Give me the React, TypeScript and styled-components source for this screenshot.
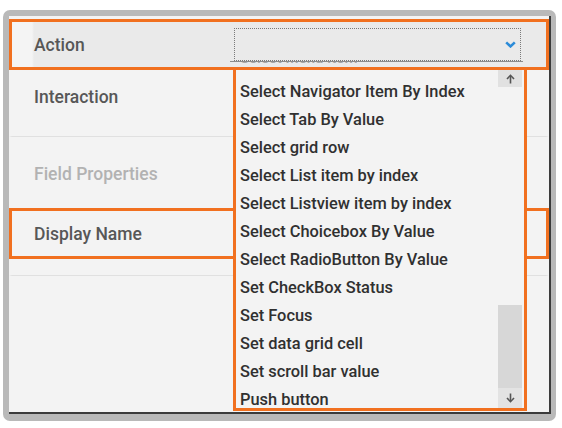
import React from "react";
import styled, { createGlobalStyle } from "styled-components";

const Global = createGlobalStyle`
  html, body { margin: 0; padding: 0; background: #ffffff; }
  body { font-family: Roboto, "Liberation Sans", Arial, sans-serif; }
`;

const ORANGE = "#f1701f";

const Frame = styled.div`
  margin: 10px 0 0 3px;
  width: 553px;
  height: 411px;
  box-sizing: border-box;
  padding: 6px 5px 7px 6px;
  background: #b9b9b9;
  border-radius: 7px;
`;

const Panel = styled.div`
  position: relative;
  height: 100%;
  box-sizing: border-box;
  background: #f3f3f3;
  border-right: 2px solid #3b3b3b;
  border-bottom: 2px solid #3b3b3b;
  padding-top: 3px;
  display: flex;
  flex-direction: column;
`;

const Row = styled.div<{ $h: number; $hl?: boolean; $top?: boolean; $line?: boolean; $shade?: boolean }>`
  flex: none;
  height: ${(p) => p.$h}px;
  box-sizing: border-box;
  display: flex;
  align-items: ${(p) => (p.$top ? "flex-start" : "center")};
  border: 3px solid ${(p) => (p.$hl ? ORANGE : "transparent")};
  ${(p) => (p.$line ? "border-bottom: 1px solid #e0e0e0;" : "")}
  background: ${(p) =>
    p.$shade
      ? "linear-gradient(to right, #f4f4f4 0, #f4f4f4 20px, #eaeaea 22px)"
      : "transparent"};
`;

const Filler = styled.div`
  flex: 1;
`;

const Label = styled.div<{ $muted?: boolean; $w?: number; $pt?: number }>`
  box-sizing: border-box;
  width: ${(p) => (p.$w ? `${p.$w}px` : "auto")};
  padding-left: 22px;
  padding-top: ${(p) => p.$pt ?? 0}px;
  font-size: 17.5px;
  line-height: 20px;
  font-weight: 500;
  color: ${(p) => (p.$muted ? "#b2b2b2" : "#575757")};
  white-space: nowrap;
`;

const SelectWrap = styled.div`
  width: 293px;
  border-bottom: 1px solid #8c8c8c;
  padding-left: 4px;
  box-sizing: border-box;
`;

const SelectBox = styled.div`
  width: 287px;
  height: 33px;
  box-sizing: border-box;
  border: 1px dotted #7a7a7a;
  display: flex;
  align-items: center;
  justify-content: flex-end;
  padding-right: 4px;
`;

const Dropdown = styled.div`
  position: absolute;
  left: 224px;
  top: 51px;
  width: 294px;
  height: 344px;
  box-sizing: border-box;
  border: 3px solid ${ORANGE};
  background: #f3f3f3;
  display: flex;
`;

const Peek = styled.div`
  position: absolute;
  left: 4px;
  top: -8px;
  height: 4px;
  overflow: hidden;
  font-size: 15px;
  font-weight: 500;
  color: #a8a8a8;
  line-height: 18px;
  white-space: nowrap;
  & > span {
    display: block;
    margin-top: -13px;
  }
`;

const List = styled.div`
  flex: 1;
  overflow: hidden;
  padding: 8px 0 0 4px;
`;

const Item = styled.div`
  height: 28px;
  line-height: 28px;
  font-size: 16.4px;
  font-weight: 500;
  color: #303030;
  white-space: nowrap;
`;

const Scroll = styled.div`
  width: 24px;
  margin-right: 2px;
  display: flex;
  flex-direction: column;
`;

const ScrollBtn = styled.div<{ $h: number; $bg: string }>`
  height: ${(p) => p.$h}px;
  background: ${(p) => p.$bg};
  display: flex;
  align-items: center;
  justify-content: center;
`;

const Track = styled.div`
  flex: 1;
  display: flex;
  flex-direction: column;
  justify-content: flex-end;
`;

const Thumb = styled.div`
  height: 83px;
  background: #d7d7d7;
`;

const Chevron = () => (
  <svg width="11" height="7" viewBox="0 0 11 7">
    <path d="M1.2 1.4 L5.5 5.4 L9.8 1.4" fill="none" stroke="#2b8bd8" strokeWidth="2.6" strokeLinejoin="miter" />
  </svg>
);

const Arrow = ({ down }: { down?: boolean }) => (
  <svg width="9" height="10" viewBox="0 0 9 10" style={down ? { transform: "rotate(180deg)" } : undefined}>
    <path d="M4.5 9.5 V2" stroke="#555" strokeWidth="1.6" fill="none" />
    <path d="M1 5 L4.5 1.3 L8 5" stroke="#555" strokeWidth="1.6" fill="none" />
  </svg>
);

const items = [
  "Select Navigator Item By Index",
  "Select Tab By Value",
  "Select grid row",
  "Select List item by index",
  "Select Listview item by index",
  "Select Choicebox By Value",
  "Select RadioButton By Value",
  "Set CheckBox Status",
  "Set Focus",
  "Set data grid cell",
  "Set scroll bar value",
  "Push button",
];

export default function App() {
  return (
    <>
      <Global />
      <Frame>
        <Panel>
          <Row $h={51} $hl $shade>
            <Label $w={218}>Action</Label>
            <SelectWrap>
              <SelectBox>
                <Chevron />
              </SelectBox>
            </SelectWrap>
          </Row>
          <Row $h={67} $top $line>
            <Label $pt={14}>Interaction</Label>
          </Row>
          <Row $h={71}>
            <Label $muted $pt={3}>Field Properties</Label>
          </Row>
          <Row $h={51} $hl>
            <Label>Display Name</Label>
          </Row>
          <Row $h={17} $line />
          <Filler />
          <Dropdown>
            <Peek>
              <span>Select Menu Item</span>
            </Peek>
            <List>
              {items.map((t) => (
                <Item key={t}>{t}</Item>
              ))}
            </List>
            <Scroll>
              <ScrollBtn $h={17} $bg="#e1e1e1">
                <Arrow />
              </ScrollBtn>
              <Track>
                <Thumb />
              </Track>
              <ScrollBtn $h={20} $bg="#e3e3e3">
                <Arrow down />
              </ScrollBtn>
            </Scroll>
          </Dropdown>
        </Panel>
      </Frame>
    </>
  );
}
